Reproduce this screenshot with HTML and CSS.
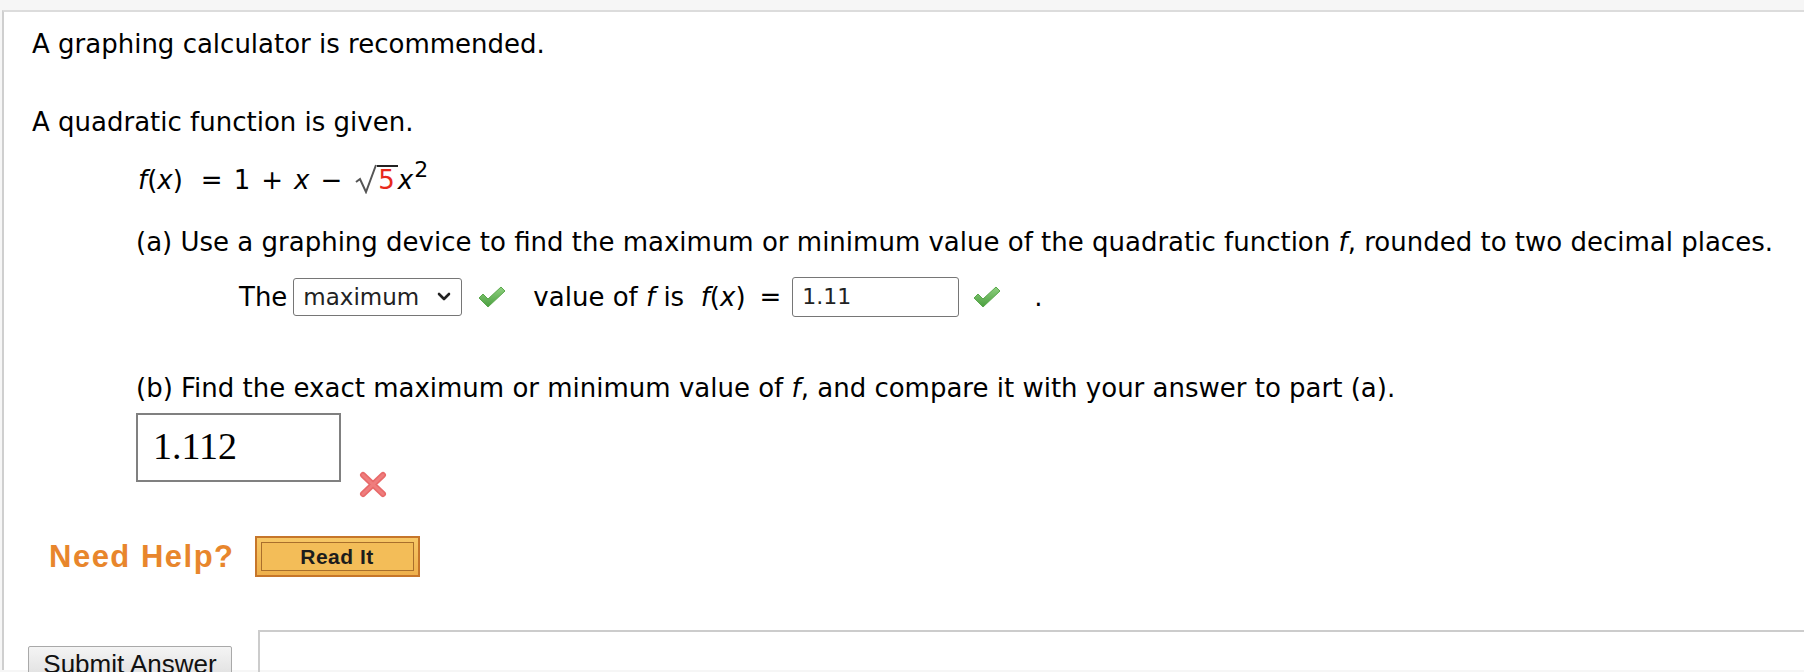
FILE: index.html
```html
<!DOCTYPE html>
<html>
<head>
<meta charset="utf-8">
<link rel="stylesheet" href="styles.css">
</head>
<body>
<div class="topband"></div>
<div class="panel">
  <p class="line l1">A graphing calculator is recommended.</p>
  <p class="line l2">A quadratic function is given.</p>
  <p class="line formula"><i>f</i>(<i>x</i>)<span class="op op-eq">=</span>1<span class="op">+</span><i>x</i><span class="op">−</span><span class="sqrt"><svg class="rad" width="23" height="31" viewBox="0 0 23 31"><path d="M1 19 L5 16 L11 29 L21 2" fill="none" stroke="#555" stroke-width="2"/></svg><span class="radicand">5</span></span><i>x</i><sup>2</sup></p>
  <p class="line parta">(a) Use a graphing device to find the maximum or minimum value of the quadratic function <i>f</i>, rounded to two decimal places.</p>
  <div class="answer-row">
    <span>The</span>
    <span class="select">maximum<svg class="chev" width="14" height="10" viewBox="0 0 14 10"><path d="M2 2 L7 7 L12 2" fill="none" stroke="#222" stroke-width="2.6" stroke-linecap="round" stroke-linejoin="round"/></svg></span>
    <svg class="check" width="30" height="24" viewBox="0 0 30 24"><defs><linearGradient id="g1" x1="0" y1="0" x2="0" y2="1"><stop offset="0" stop-color="#8fd07f"/><stop offset="1" stop-color="#4a9e3f"/></linearGradient></defs><path d="M2 13 L6 9 L11 14 L24 2 L28 6 L11 22 Z" fill="url(#g1)" stroke="#5aa84c" stroke-width="1" stroke-linejoin="round"/></svg>
    <span class="valtext">value of <i>f</i> is&nbsp; <i>f</i>(<i>x</i>)<span class="op">=</span></span>
    <span class="textbox">1.11</span>
    <svg class="check check2" width="30" height="24" viewBox="0 0 30 24"><defs><linearGradient id="g2" x1="0" y1="0" x2="0" y2="1"><stop offset="0" stop-color="#8fd07f"/><stop offset="1" stop-color="#4a9e3f"/></linearGradient></defs><path d="M2 13 L6 9 L11 14 L24 2 L28 6 L11 22 Z" fill="url(#g2)" stroke="#5aa84c" stroke-width="1" stroke-linejoin="round"/></svg>
    <span class="dot">.</span>
  </div>
  <p class="line partb">(b) Find the exact maximum or minimum value of <i>f</i>, and compare it with your answer to part (a).</p>
  <div class="exact-row">
    <div class="bigbox">1.112</div>
    <svg class="cross" width="28" height="27" viewBox="0 0 28 27"><path d="M4 4 L24 23 M24 4 L4 23" stroke="#e86a6a" stroke-width="6" stroke-linecap="round"/><path d="M4 4 L24 23 M24 4 L4 23" stroke="#ef7d7d" stroke-width="3" stroke-linecap="round"/></svg>
  </div>
  <div class="help-row">
    <span class="needhelp">Need Help?</span>
    <span class="readit"><span class="readit-inner">Read It</span></span>
  </div>
  <div class="bottom-row">
    <button class="submit">Submit Answer</button>
    <div class="notes"></div>
  </div>
</div>
</body>
</html>
```
FILE: styles.css
```css
html, body {
  margin: 0;
  padding: 0;
  background: #f6f6f6;
  overflow: hidden;
}
body {
  width: 1804px;
  height: 672px;
  font-family: "DejaVu Sans", Verdana, sans-serif;
  color: #000;
}
.topband {
  height: 10px;
  background: #f6f6f6;
}
.panel {
  margin-left: 2px;
  border-top: 2px solid #dcdcdc;
  border-left: 2px solid #cfcfcf;
  background: #fff;
  height: 660px;
  padding-left: 28px;
  box-sizing: border-box;
  font-size: 26px;
}
.line {
  margin: 0;
  line-height: 30px;
  white-space: nowrap;
}
.l1 { padding-top: 17px; }
.l2 { margin-top: 48px; }
.formula { margin-top: 26px; padding-left: 106px; }
i { font-style: italic; }
.op { padding: 0 11px; }
.formula .op-eq { padding: 0 11px 0 18px; }
.sqrt {
  display: inline-flex;
  align-items: flex-end;
  margin-left: 2px;
  vertical-align: -5px;
}
.rad { display: block; margin-right: -1px; }
.radicand {
  color: #e8291c;
  border-top: 2px solid #222;
  line-height: 27px;
  padding: 0 3px 0 1px;
}
sup {
  font-size: 22px;
  vertical-align: 12px;
  line-height: 0;
  margin-left: 1px;
}
.parta { margin-top: 32px; padding-left: 104px; }
.answer-row {
  display: flex;
  align-items: center;
  margin-top: 20px;
  padding-left: 207px;
  height: 40px;
  white-space: nowrap;
}
.select {
  display: inline-flex;
  align-items: center;
  justify-content: space-between;
  box-sizing: border-box;
  width: 169px;
  height: 38px;
  margin-left: 6px;
  padding: 0 10px 0 9px;
  border: 1px solid #767676;
  border-radius: 3px;
  font-size: 23px;
  color: #222;
}
.check { margin-left: 15px; flex: none; }
.check2 { margin-left: 13px; }
.valtext { margin-left: 26px; }
.valtext .op { padding: 0 11px 0 14px; }
.textbox {
  box-sizing: border-box;
  width: 167px;
  height: 40px;
  border: 1px solid #767676;
  border-radius: 3px;
  padding-left: 9px;
  line-height: 38px;
  font-size: 22px;
  color: #222;
}
.dot { margin-left: 32px; }
.partb { margin-top: 56px; padding-left: 104px; }
.exact-row {
  display: flex;
  align-items: flex-start;
  margin-top: 10px;
  padding-left: 104px;
}
.bigbox {
  box-sizing: border-box;
  width: 205px;
  height: 69px;
  border: 2px solid #808080;
  padding-left: 15px;
  font-family: "Liberation Serif", "Times New Roman", serif;
  font-size: 38px;
  line-height: 62px;
}
.cross { margin-left: 18px; margin-top: 58px; }
.help-row {
  display: flex;
  align-items: center;
  margin-top: 38px;
  padding-left: 17px;
}
.needhelp {
  font-family: "Liberation Sans", Arial, sans-serif;
  font-weight: bold;
  font-size: 31px;
  letter-spacing: 1.5px;
  color: #e8862c;
}
.readit {
  display: inline-block;
  box-sizing: border-box;
  width: 165px;
  height: 41px;
  margin-left: 20px;
  padding: 4px;
  background: linear-gradient(#f7c866, #eeb04c);
  border: 2px solid #c6762a;
}
.readit-inner {
  display: block;
  box-sizing: border-box;
  height: 100%;
  border: 1px solid #a96f2c;
  text-align: center;
  font-family: "Liberation Sans", Arial, sans-serif;
  font-weight: bold;
  font-size: 21px;
  letter-spacing: 0.5px;
  line-height: 27px;
  color: #1c1c1c;
  background: #f3bd58;
}
.bottom-row {
  display: flex;
  align-items: flex-start;
  margin-top: 53px;
  margin-left: -4px;
}
.submit {
  margin-top: 16px;
  width: 204px;
  height: 36px;
  padding: 0;
  border: 1px solid #a9a9a9;
  border-radius: 2px;
  background: linear-gradient(#f4f4f4, #dedede);
  font-family: "Liberation Sans", Arial, sans-serif;
  font-size: 26px;
  color: #111;
  line-height: 30px;
  text-align: center;
}
.notes {
  margin-left: 26px;
  flex: 1;
  height: 60px;
  border: 2px solid #cccccc;
  border-right: none;
  border-bottom: none;
}
```
